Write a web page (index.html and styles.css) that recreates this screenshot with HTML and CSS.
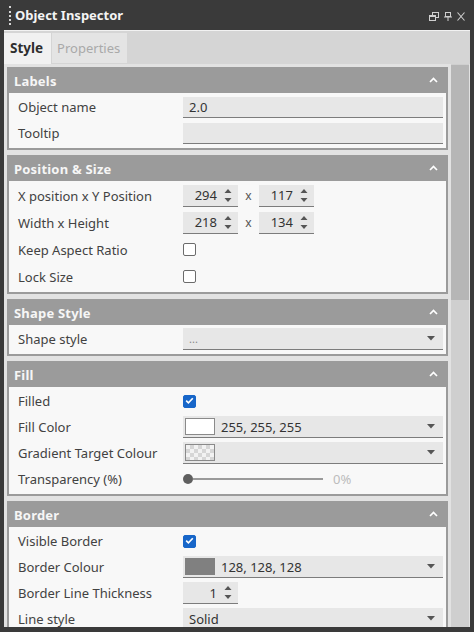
FILE: index.html
```html
<!DOCTYPE html>
<html>
<head>
<meta charset="utf-8">
<link rel="stylesheet" href="styles.css">
</head>
<body>
<div class="window">
  <div class="titlebar">
    <span class="grip"></span>
    <span class="title">Object Inspector</span>
    <span class="tb-icons">
      <svg class="ic-restore" width="10" height="9" viewBox="0 0 10 9"><rect x="3.5" y="0.5" width="6" height="5" fill="none" stroke="#cfcfcf"/><rect x="0.5" y="3.5" width="6" height="5" fill="#3a3a3a" stroke="#cfcfcf"/><line x1="0.5" y1="4.5" x2="6.5" y2="4.5" stroke="#cfcfcf"/></svg>
      <svg class="ic-pin" width="8" height="9" viewBox="0 0 8 9"><rect x="1.5" y="0.5" width="5" height="4" fill="none" stroke="#cfcfcf"/><line x1="0" y1="5" x2="8" y2="5" stroke="#cfcfcf"/><line x1="4" y1="5" x2="4" y2="9" stroke="#cfcfcf"/></svg>
      <svg class="ic-close" width="8" height="9" viewBox="0 0 8 9"><line x1="0.5" y1="0.5" x2="7.5" y2="8.5" stroke="#cfcfcf" stroke-width="1.1"/><line x1="7.5" y1="0.5" x2="0.5" y2="8.5" stroke="#cfcfcf" stroke-width="1.1"/></svg>
    </span>
  </div>
  <div class="client">
    <div class="tabs">
      <div class="tab active">Style</div>
      <div class="tab">Properties</div>
    </div>
    <div class="scroll">
      <div class="sections">

        <section class="group">
          <div class="group-head"><span>Labels</span><svg width="9" height="6" viewBox="0 0 9 6"><polyline points="1,5 4.5,1.5 8,5" fill="none" stroke="#fff" stroke-width="1.7"/></svg></div>
          <div class="group-body">
            <div class="row"><span class="label">Object name</span><div class="value"><div class="field">2.0</div></div></div>
            <div class="row"><span class="label">Tooltip</span><div class="value"><div class="field"></div></div></div>
          </div>
        </section>

        <section class="group">
          <div class="group-head"><span>Position &amp; Size</span><svg width="9" height="6" viewBox="0 0 9 6"><polyline points="1,5 4.5,1.5 8,5" fill="none" stroke="#fff" stroke-width="1.7"/></svg></div>
          <div class="group-body">
            <div class="row tall"><span class="label">X position x Y Position</span><div class="value">
              <div class="spin"><span>294</span><svg width="8" height="15" viewBox="0 0 8 15"><polygon points="0.5,5 4,1 7.5,5" fill="#555"/><polygon points="0.5,10 4,14 7.5,10" fill="#555"/></svg></div>
              <span class="times">x</span>
              <div class="spin"><span>117</span><svg width="8" height="15" viewBox="0 0 8 15"><polygon points="0.5,5 4,1 7.5,5" fill="#555"/><polygon points="0.5,10 4,14 7.5,10" fill="#555"/></svg></div>
            </div></div>
            <div class="row tall"><span class="label">Width x Height</span><div class="value">
              <div class="spin"><span>218</span><svg width="8" height="15" viewBox="0 0 8 15"><polygon points="0.5,5 4,1 7.5,5" fill="#555"/><polygon points="0.5,10 4,14 7.5,10" fill="#555"/></svg></div>
              <span class="times">x</span>
              <div class="spin"><span>134</span><svg width="8" height="15" viewBox="0 0 8 15"><polygon points="0.5,5 4,1 7.5,5" fill="#555"/><polygon points="0.5,10 4,14 7.5,10" fill="#555"/></svg></div>
            </div></div>
            <div class="row tall"><span class="label">Keep Aspect Ratio</span><div class="value"><span class="check"></span></div></div>
            <div class="row tall"><span class="label">Lock Size</span><div class="value"><span class="check"></span></div></div>
          </div>
        </section>

        <section class="group">
          <div class="group-head"><span>Shape Style</span><svg width="9" height="6" viewBox="0 0 9 6"><polyline points="1,5 4.5,1.5 8,5" fill="none" stroke="#fff" stroke-width="1.7"/></svg></div>
          <div class="group-body">
            <div class="row"><span class="label">Shape style</span><div class="value"><div class="combo"><span class="muted">...</span><svg width="8" height="5" viewBox="0 0 8 5"><polygon points="0,0 8,0 4,4.5" fill="#555"/></svg></div></div></div>
          </div>
        </section>

        <section class="group">
          <div class="group-head"><span>Fill</span><svg width="9" height="6" viewBox="0 0 9 6"><polyline points="1,5 4.5,1.5 8,5" fill="none" stroke="#fff" stroke-width="1.7"/></svg></div>
          <div class="group-body">
            <div class="row"><span class="label">Filled</span><div class="value"><span class="check on"><svg width="13" height="13" viewBox="0 0 13 13"><polyline points="3.2,6.6 5.4,8.8 9.8,4.2" fill="none" stroke="#fff" stroke-width="1.6"/></svg></span></div></div>
            <div class="row"><span class="label">Fill Color</span><div class="value"><div class="combo swatchcombo"><span class="sw-wrap"><span class="swatch white"></span><span>255, 255, 255</span></span><svg width="8" height="5" viewBox="0 0 8 5"><polygon points="0,0 8,0 4,4.5" fill="#555"/></svg></div></div></div>
            <div class="row"><span class="label">Gradient Target Colour</span><div class="value"><div class="combo swatchcombo"><span class="sw-wrap"><span class="swatch checker"></span></span><svg width="8" height="5" viewBox="0 0 8 5"><polygon points="0,0 8,0 4,4.5" fill="#555"/></svg></div></div></div>
            <div class="row"><span class="label">Transparency (%)</span><div class="value"><div class="slider"><span class="knob"></span><span class="track"></span></div><span class="pct">0%</span></div></div>
          </div>
        </section>

        <section class="group">
          <div class="group-head"><span>Border</span><svg width="9" height="6" viewBox="0 0 9 6"><polyline points="1,5 4.5,1.5 8,5" fill="none" stroke="#fff" stroke-width="1.7"/></svg></div>
          <div class="group-body">
            <div class="row"><span class="label">Visible Border</span><div class="value"><span class="check on"><svg width="13" height="13" viewBox="0 0 13 13"><polyline points="3.2,6.6 5.4,8.8 9.8,4.2" fill="none" stroke="#fff" stroke-width="1.6"/></svg></span></div></div>
            <div class="row"><span class="label">Border Colour</span><div class="value"><div class="combo swatchcombo"><span class="sw-wrap"><span class="swatch grey"></span><span>128, 128, 128</span></span><svg width="8" height="5" viewBox="0 0 8 5"><polygon points="0,0 8,0 4,4.5" fill="#555"/></svg></div></div></div>
            <div class="row"><span class="label">Border Line Thickness</span><div class="value"><div class="spin"><span>1</span><svg width="8" height="15" viewBox="0 0 8 15"><polygon points="0.5,5 4,1 7.5,5" fill="#555"/><polygon points="0.5,10 4,14 7.5,10" fill="#555"/></svg></div></div></div>
            <div class="row"><span class="label">Line style</span><div class="value"><div class="combo"><span>Solid</span><svg width="8" height="5" viewBox="0 0 8 5"><polygon points="0,0 8,0 4,4.5" fill="#555"/></svg></div></div></div>
          </div>
        </section>

      </div>
      <div class="scrollbar"><div class="thumb"></div></div>
    </div>
  </div>
</div>
</body>
</html>
```

FILE: styles.css
```css
html, body {
  margin: 0;
  padding: 0;
  background: #3a3a3a;
}
body {
  font-family: "Noto Sans", "Open Sans", sans-serif;
  font-size: 13px;
}
.window {
  width: 474px;
  height: 632px;
  display: flex;
  flex-direction: column;
  overflow: hidden;
  background: #3a3a3a;
}
.titlebar {
  height: 30px;
  flex: none;
  display: flex;
  align-items: center;
  padding-left: 9px;
  color: #fff;
}
.grip {
  width: 0;
  height: 19px;
  border-left: 2px dotted #d6d6d6;
  margin-right: 4px;
  margin-top: 1px;
}
.title {
  flex: 1;
  font-weight: bold;
  font-size: 13px;
  color: #f4f4f4;
}
.tb-icons {
  display: flex;
  align-items: center;
  gap: 5px;
  padding-right: 9px;
  margin-top: 2px;
}
.client {
  flex: 1;
  min-height: 0;
  margin: 0 4px 5px 4px;
  background: #d5d5d5;
  border-top: 1px solid #f2f2f2;
  display: flex;
  flex-direction: column;
}
.tabs {
  height: 33px;
  flex: none;
  display: flex;
  align-items: flex-end;
}
.tab {
  height: 30px;
  line-height: 30px;
  padding: 0 7px 0 5px;
  background: #e4e4e4;
  color: #a9a9a9;
  margin-bottom: 1px;
}
.tab.active {
  height: 31px;
  line-height: 31px;
  padding: 0 8px 0 6px;
  background: #f1f1f1;
  color: #2e2e2e;
  font-weight: bold;
  font-size: 13.5px;
  margin-right: 1px;
  margin-bottom: 0;
}
.scroll {
  flex: 1;
  min-height: 0;
  display: flex;
  overflow: hidden;
  background: #e2e2e2;
}
.sections {
  flex: 1;
  min-width: 0;
  padding: 3px 3px 0 3px;
  display: flex;
  flex-direction: column;
  gap: 5px;
}
.scrollbar {
  width: 18px;
  flex: none;
  margin-right: 1px;
  background: #cfcfcf;
  display: flex;
  flex-direction: column;
}
.thumb {
  height: 235px;
  margin-top: 1px;
  background: #b6b6b6;
}
.group {
  flex: none;
  border: 2px solid #9b9b9b;
  background: #f8f8f8;
}
.group-head {
  height: 24px;
  background: #9b9b9b;
  color: #f6f6f6;
  font-weight: bold;
  display: flex;
  align-items: center;
  justify-content: space-between;
  padding: 0 8px 0 5px;
  letter-spacing: 0.2px;
}
.group-head svg {
  margin-top: -2px;
}
.group-body {
  padding: 1px 3px 2px 9px;
}
.row {
  height: 26px;
  display: flex;
  align-items: center;
}
.row.tall {
  height: 27px;
}
.label {
  width: 165px;
  flex: none;
  color: #424242;
}
.value {
  flex: 1;
  min-width: 0;
  display: flex;
  align-items: center;
  color: #333;
}
.field {
  flex: 1;
  height: 20px;
  line-height: 20px;
  background: #e7e7e7;
  border-bottom: 1px solid #7c7c7c;
  padding: 0 6px;
  color: #333;
}
.combo {
  flex: 1;
  height: 21px;
  background: #e7e7e7;
  border-bottom: 1px solid #7c7c7c;
  padding: 0 8px 0 6px;
  display: flex;
  align-items: center;
  justify-content: space-between;
  color: #333;
}
.combo.swatchcombo {
  padding-left: 2px;
}
.muted {
  color: #888;
  font-size: 11px;
}
.sw-wrap {
  display: flex;
  align-items: center;
  gap: 6px;
}
.swatch {
  width: 30px;
  height: 17px;
  box-sizing: border-box;
  border: 1px solid #8a8a8a;
}
.swatch.white {
  background: #ffffff;
}
.swatch.grey {
  background: #808080;
  border-color: #808080;
}
.swatch.checker {
  background-color: #f2f2f2;
  background-image:
    linear-gradient(45deg, #d6d6d6 25%, transparent 25%, transparent 75%, #d6d6d6 75%),
    linear-gradient(45deg, #d6d6d6 25%, transparent 25%, transparent 75%, #d6d6d6 75%);
  background-size: 8px 8px;
  background-position: 0 0, 4px 4px;
}
.spin {
  width: 55px;
  height: 22px;
  box-sizing: border-box;
  flex: none;
  background: #e7e7e7;
  border-bottom: 1px solid #7c7c7c;
  display: flex;
  align-items: center;
  justify-content: flex-end;
  gap: 7px;
  padding-right: 6px;
  color: #333;
}
.times {
  width: 21px;
  text-align: center;
  color: #555;
  font-size: 12px;
}
.check {
  width: 13px;
  height: 13px;
  box-sizing: border-box;
  border: 1.5px solid #6b6b6b;
  border-radius: 2px;
  background: #fff;
  display: block;
  position: relative;
}
.check.on {
  background: #1766c9;
  border-color: #1766c9;
}
.check.on svg {
  position: absolute;
  left: -1.5px;
  top: -1.5px;
}
.slider {
  width: 140px;
  display: flex;
  align-items: center;
  margin-left: 0;
}
.knob {
  width: 10px;
  height: 10px;
  border-radius: 50%;
  background: #5f5f5f;
  flex: none;
}
.track {
  flex: 1;
  height: 2px;
  background: #9a9a9a;
}
.pct {
  margin-left: 10px;
  color: #bcbcbc;
}
```
